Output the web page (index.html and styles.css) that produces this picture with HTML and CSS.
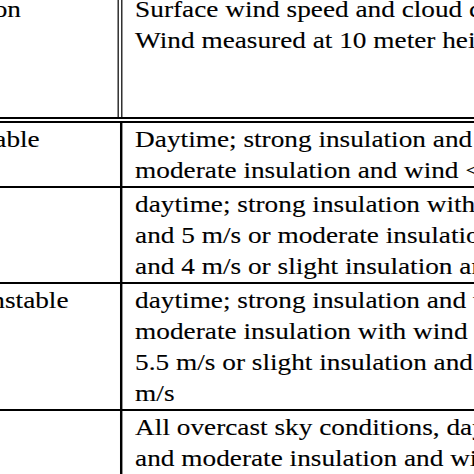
FILE: index.html
```html
<!DOCTYPE html>
<html>
<head>
<meta charset="utf-8">
<link rel="stylesheet" href="styles.css">
</head>
<body>
<div class="sheet">
  <div class="table">
    <div class="row row-head">
      <div class="cell label label-head">Stability<br>classification</div>
      <div class="cell desc desc-head">Surface wind speed and cloud cover<br>Wind measured at 10 meter height</div>
    </div>
    <div class="row">
      <div class="cell label">Very Unstable</div>
      <div class="cell desc">Daytime; strong insulation and wind &lt; 2 m/s or<br>moderate insulation and wind &lt; 2 m/s</div>
    </div>
    <div class="row">
      <div class="cell label">Unstable</div>
      <div class="cell desc">daytime; strong insulation with wind between 2<br>and 5 m/s or moderate insulation with wind between 2<br>and 4 m/s or slight insulation and wind &lt; 2 m/s</div>
    </div>
    <div class="row">
      <div class="cell label">Slightly unstable</div>
      <div class="cell desc">daytime; strong insulation and wind &gt; 5 m/s or<br>moderate insulation with wind between 4 and<br>5.5 m/s or slight insulation and wind between 2 and 5<br>m/s</div>
    </div>
    <div class="row">
      <div class="cell label">Neutral</div>
      <div class="cell desc">All overcast sky conditions, day or night, strong<br>and moderate insulation and wind &gt; 5.5 m/s</div>
    </div>
  </div>
</div>
</body>
</html>
```

FILE: styles.css
```css
html, body {
  margin: 0;
  padding: 0;
  background: #fff;
  overflow: hidden;
  width: 474px;
  height: 474px;
}

.sheet {
  width: 600px;
  margin-top: -37px;
  transform: scaleX(1.212);
  transform-origin: 0 0;
  font-family: "Liberation Serif", "Times New Roman", serif;
  font-size: 22.5px;
  line-height: 31px;
  color: #000;
  -webkit-text-stroke: 0.12px #000;
}

.table {
  margin-left: -110px;
}

.row {
  display: flex;
  border-bottom: 2px solid #000;
}

.row-head {
  height: 160px;
  box-sizing: border-box;
  border-bottom: 6px double #000;
}

.cell {
  box-sizing: border-box;
  white-space: nowrap;
}

.label {
  flex: 0 0 211.3px;
  width: 211.3px;
  padding-left: 14.7px;
  padding-top: 1px;
  border-right: 2px solid #000;
}

.label-head {
  padding-top: 0;
  padding-left: 8.6px;
  border-right: 4px double #000;
}

.desc {
  flex: 1;
  padding-left: 10.2px;
  padding-top: 1px;
}

.desc-head {
  padding-top: 31px;
}
```
